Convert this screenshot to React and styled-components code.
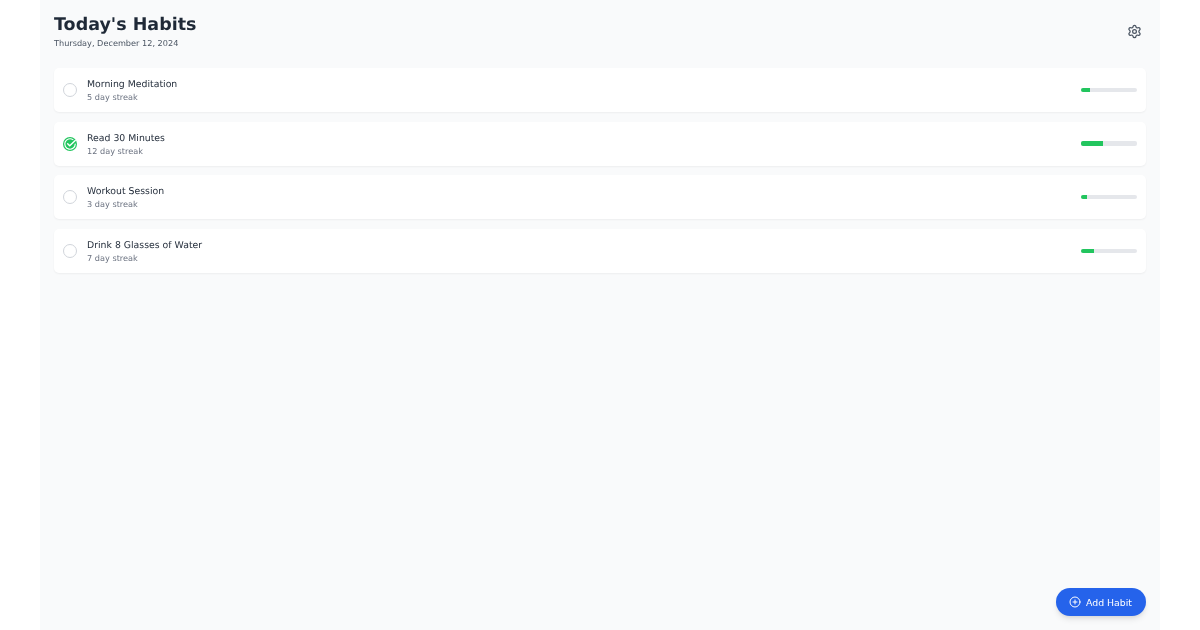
import React from "react";
import styled, { createGlobalStyle } from "styled-components";
import { Settings, CirclePlus } from "lucide-react";

const GlobalStyle = createGlobalStyle`
  html, body {
    margin: 0;
    padding: 0;
    height: 100%;
    background: #fff;
    font-family: "DejaVu Sans", sans-serif;
    text-rendering: geometricPrecision;
  }
`;

const Page = styled.div`
  position: relative;
  box-sizing: border-box;
  width: 1120px;
  height: 630px;
  margin: 0 auto;
  padding: 14px;
  background: #f9fafb;
`;

const Header = styled.header`
  display: flex;
  align-items: center;
  justify-content: space-between;
  margin-bottom: 19px;
`;

const Heading = styled.div`
  padding-top: 1px;
  will-change: transform;
`;

const Title = styled.h1`
  margin: 0 0 2px;
  font-size: 17.5px;
  line-height: 20px;
  font-weight: 700;
  color: #1f2937;
`;

const DateLine = styled.p`
  margin: 0;
  font-size: 8.17px;
  line-height: 12px;
  color: #4b5563;
`;

const IconButton = styled.button`
  display: flex;
  padding: 4px;
  border: 0;
  background: none;
  color: #4b5563;
`;

const List = styled.div`
  display: flex;
  flex-direction: column;
  gap: 9.6px;
`;

const Card = styled.div`
  display: flex;
  align-items: center;
  justify-content: space-between;
  box-sizing: border-box;
  height: 44px;
  padding: 0 9px;
  background: #fff;
  border-radius: 5px;
  box-shadow: 0 1px 2px rgba(0, 0, 0, 0.05);
`;

const Left = styled.div`
  display: flex;
  align-items: center;
  gap: 9.6px;
`;

const Circle = styled.span`
  box-sizing: border-box;
  width: 14px;
  height: 14px;
  border: 1.5px solid #d1d5db;
  border-radius: 50%;
`;

const Check = styled.svg`
  display: block;
  width: 14px;
  height: 14px;
`;

const Label = styled.div`
  padding-top: 2px;
  will-change: transform;
`;

const Name = styled.div`
  font-size: 9.33px;
  line-height: 12px;
  color: #1f2937;
`;

const Streak = styled.div`
  font-size: 8.17px;
  line-height: 12px;
  color: #6b7280;
`;

const Track = styled.div`
  width: 56px;
  height: 4.4px;
  background: #e5e7eb;
  border-radius: 2px;
  overflow: hidden;
`;

const Fill = styled.div`
  height: 100%;
  background: #22c55e;
`;

const AddButton = styled.button`
  position: absolute;
  right: 14px;
  bottom: 14px;
  display: flex;
  align-items: center;
  gap: 5px;
  height: 28px;
  padding: 0 14px 0 13px;
  border: 0;
  border-radius: 14px;
  background: #2563eb;
  color: #fff;
  font-family: inherit;
  font-size: 9.33px;
  box-shadow: 0 4px 6px -1px rgba(0, 0, 0, 0.1), 0 2px 4px -2px rgba(0, 0, 0, 0.1);
`;

const ButtonText = styled.span`
  will-change: transform;
`;

const habits = [
  { name: "Morning Meditation", streak: 5, progress: 16 },
  { name: "Read 30 Minutes", streak: 12, progress: 40, done: true },
  { name: "Workout Session", streak: 3, progress: 10 },
  { name: "Drink 8 Glasses of Water", streak: 7, progress: 23 },
];

function DoneIcon() {
  return (
    <Check viewBox="0 0 24 24" fill="none">
      <circle cx="12" cy="12" r="12" fill="#22c55e" />
      <path
        d="M21 12a9 9 0 1 1-4-7.5"
        stroke="#fff"
        strokeWidth="2"
        strokeLinecap="round"
      />
      <path
        d="m8 11.5 3.5 3.5L21 6"
        stroke="#fff"
        strokeWidth="2.4"
        strokeLinecap="round"
        strokeLinejoin="round"
      />
    </Check>
  );
}

export default function App() {
  return (
    <Page>
      <GlobalStyle />
      <Header>
        <Heading>
          <Title>Today's Habits</Title>
          <DateLine>Thursday, December 12, 2024</DateLine>
        </Heading>
        <IconButton>
          <Settings size={15} strokeWidth={2} />
        </IconButton>
      </Header>
      <List>
        {habits.map(h => (
          <Card key={h.name}>
            <Left>
              {h.done ? <DoneIcon /> : <Circle />}
              <Label>
                <Name>{h.name}</Name>
                <Streak>{h.streak} day streak</Streak>
              </Label>
            </Left>
            <Track>
              <Fill style={{ width: `${h.progress}%` }} />
            </Track>
          </Card>
        ))}
      </List>
      <AddButton>
        <CirclePlus size={12} strokeWidth={2} />
        <ButtonText>Add Habit</ButtonText>
      </AddButton>
    </Page>
  );
}
